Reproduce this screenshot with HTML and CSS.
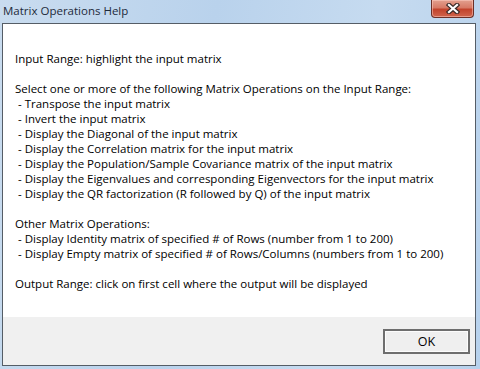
FILE: index.html
```html
<!DOCTYPE html>
<html>
<head>
  <meta name="viewport" content="width=device-width, initial-scale=1.0">
  <title>Matrix Operations Help</title>
  <link rel="stylesheet" href="styles.css">
</head>
<body>
  <div class="window">
    <div class="titlebar">
      <span class="title">Matrix Operations Help</span>
      <button class="close-button" type="button">
        <svg width="14" height="11" viewBox="0 0 14 11">
          <path d="M3 2 L11 9 M11 2 L3 9" stroke="#3b2a28" stroke-width="4.5" stroke-linecap="square"/>
          <path d="M3 2 L11 9 M11 2 L3 9" stroke="#ffffff" stroke-width="2.2" stroke-linecap="square"/>
        </svg>
      </button>
    </div>
    <div class="client">
      <div class="help-text">
        <p>Input Range: highlight the input matrix</p>
        <p>Select one or more of the following Matrix Operations on the Input Range:<br>
        &nbsp;- Transpose the input matrix<br>
        &nbsp;- Invert the input matrix<br>
        &nbsp;- Display the Diagonal of the input matrix<br>
        &nbsp;- Display the Correlation matrix for the input matrix<br>
        &nbsp;- Display the Population/Sample Covariance matrix of the input matrix<br>
        &nbsp;- Display the Eigenvalues and corresponding Eigenvectors for the input matrix<br>
        &nbsp;- Display the QR factorization (R followed by Q) of the input matrix</p>
        <p>Other Matrix Operations:<br>
        &nbsp;- Display Identity matrix of specified # of Rows (number from 1 to 200)<br>
        &nbsp;- Display Empty matrix of specified # of Rows/Columns (numbers from 1 to 200)</p>
        <p>Output Range: click on first cell where the output will be displayed</p>
      </div>
      <div class="footer">
        <button class="ok-button" type="button">OK</button>
      </div>
    </div>
  </div>
</body>
</html>
```
FILE: styles.css
```css
body {
  margin: 0;
  font-family: "Open Sans", Arial, sans-serif;
  font-size: 11.5px;
}

.window {
  width: 480px;
  height: 369px;
  display: flex;
  flex-direction: column;
  background: linear-gradient(100deg, #c9dcef 0%, #b9d2ec 40%, #c6dbf0 70%, #b7d1ec 100%);
}

.titlebar {
  height: 23px;
  display: flex;
  justify-content: space-between;
  align-items: flex-start;
}

.title {
  padding: 3px 0 0 3px;
  font-size: 11.5px;
  color: #1e2a3a;
}

.close-button {
  width: 43px;
  height: 18px;
  margin-right: 6px;
  padding: 0;
  display: flex;
  align-items: center;
  justify-content: center;
  border: 1px solid #6b3028;
  border-top: none;
  border-radius: 0 0 4px 4px;
  background: linear-gradient(#e2a08f 0%, #d77a66 45%, #c2432c 55%, #d0654d 100%);
  box-shadow: inset 0 0 0 1px rgba(255, 210, 200, 0.5);
}

.client {
  flex: 1;
  margin: 0 4px 3px 2px;
  border: 1px solid #555d66;
  display: flex;
  flex-direction: column;
  background-color: #ffffff;
}

.help-text {
  flex: 1;
  padding: 27px 0 0 12px;
  line-height: 15px;
  color: #000000;
}

.help-text p {
  margin: 0 0 15px 0;
}

.footer {
  height: 48px;
  background-color: #f0f0f0;
  display: flex;
  justify-content: flex-end;
  align-items: flex-start;
}

.ok-button {
  width: 87px;
  height: 25px;
  margin: 12px 5px 0 0;
  border: 2px solid #6e6e6e;
  background-color: #efefef;
  box-shadow: inset 0 0 0 1px #fcfcfc;
  font-family: "Open Sans", Arial, sans-serif;
  font-size: 12.5px;
  color: #000000;
}
```
